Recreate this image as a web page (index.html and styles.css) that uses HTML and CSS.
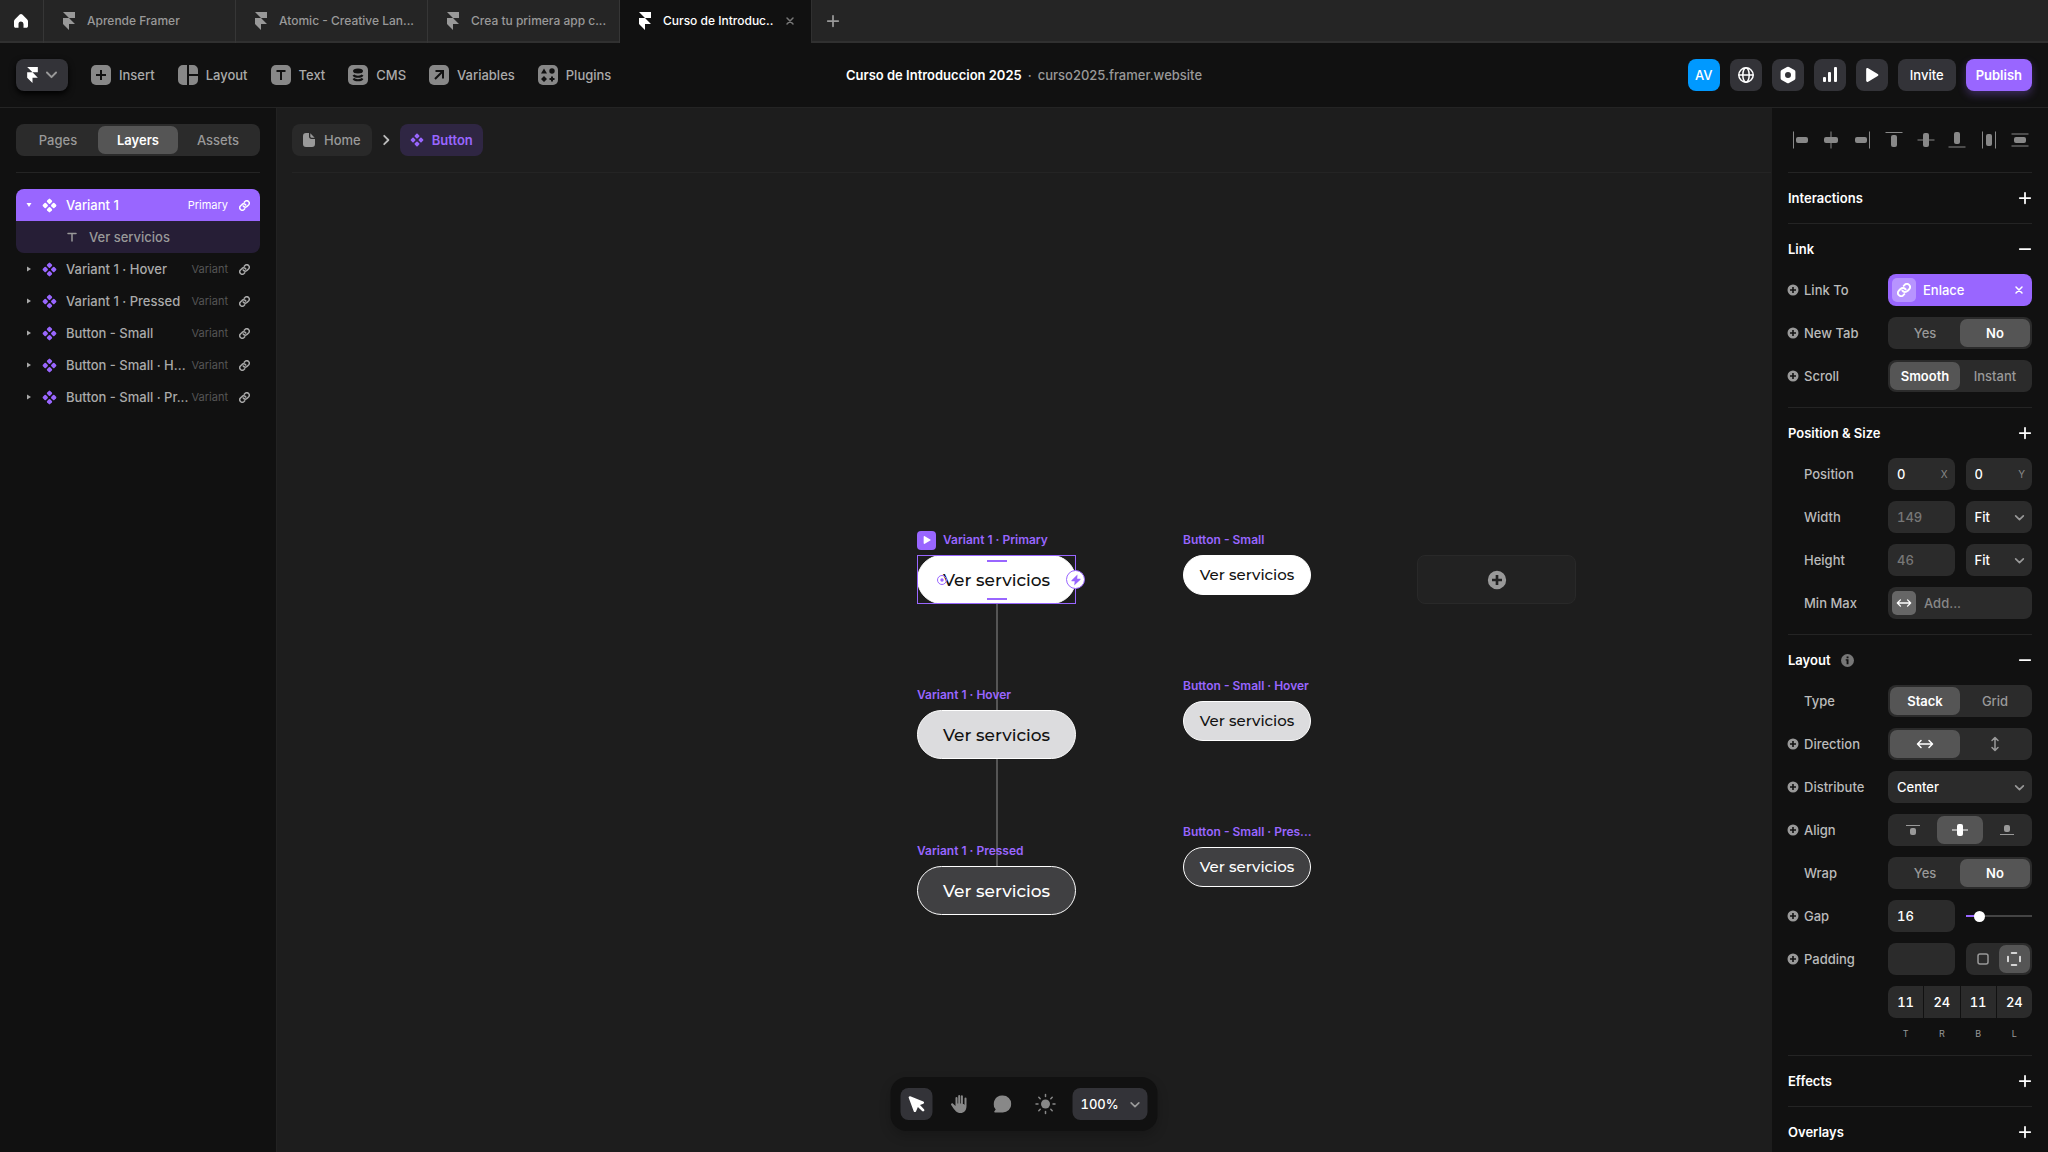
FILE: index.html
```html
<!DOCTYPE html>
<html lang="es">
<head>
    <meta charset="utf-8">
    <title>Curso de Introduccion 2025</title>
    <link rel="stylesheet" href="styles.css">
</head>
<body>
    <svg class="sprite" aria-hidden="true">
        <symbol id="logo" viewBox="0 0 16 24"><path d="M0 0h16v8H8zM0 8h8l8 8H0zM0 16h8v8z"/></symbol>
        <symbol id="home" viewBox="0 0 14 14"><path d="M7 0c.5 0 .9.3 1.300.6L13 5.200c.6.600 1 1.300 1 2.100V12c0 1-.7 1.800-1.700 1.800H9.500V10a2.500 2.500 0 0 0-5 0v3.800H1.700C.7 13.800 0 13 0 12V7.300c0-.8.4-1.500 1-2.100L5.700.6C6.100.3 6.500 0 7 0z"/></symbol>
        <symbol id="chevron" viewBox="0 0 10 10"><path class="line" d="M1.500 3.500L5 7l3.500-3.500"/></symbol>
        <symbol id="plus" viewBox="0 0 12 12"><path class="line" d="M6 1.500v9M1.500 6h9"/></symbol>
        <symbol id="minus" viewBox="0 0 12 12"><path class="line" d="M1.500 6h9"/></symbol>
        <symbol id="close" viewBox="0 0 10 10"><path class="line" d="M2 2l6 6M8 2l-6 6"/></symbol>
        <symbol id="component" viewBox="0 0 16 16"><rect x="5.700" y="1.200" width="4.600" height="4.600" rx="1" transform="rotate(45 8 3.500)"/><rect x="5.700" y="10.200" width="4.600" height="4.600" rx="1" transform="rotate(45 8 12.500)"/><rect x="1.200" y="5.700" width="4.600" height="4.600" rx="1" transform="rotate(45 3.500 8)"/><rect x="10.200" y="5.700" width="4.600" height="4.600" rx="1" transform="rotate(45 12.500 8)"/></symbol>
        <symbol id="link" viewBox="1 1 22 22"><path class="line chain" d="M9.500 13a5 5 0 0 0 8 .5l3-3a5 5 0 0 0-7-7L11.500 5.500M14.500 11a5 5 0 0 0-8-.5l-3 3a5 5 0 0 0 7 7L12.500 18.500"/></symbol>
        <symbol id="add" viewBox="0 0 12 12"><path fill-rule="evenodd" d="M6 .5a5.500 5.500 0 1 0 0 11 5.500 5.500 0 0 0 0-11zM5.200 3h1.600v2.200H9v1.600H6.800V9H5.200V6.800H3V5.200h2.200z"/></symbol>
        <symbol id="arrows" viewBox="0 0 18 12"><path class="line" d="M2 6h14M5 2.500L1.500 6 5 9.500M13 2.500L16.500 6 13 9.500"/></symbol>
        <symbol id="arrows-v" viewBox="0 0 12 16"><path class="line" d="M6 2v12M3 4.500L6 1.500l3 3M3 11.500l3 3 3-3"/></symbol>
        <symbol id="play" viewBox="0 0 12 12"><path d="M1 1.200C1 .3 1.900-.2 2.700.3l8.200 4.800c.8.400.8 1.400 0 1.800l-8.200 4.800c-.8.500-1.700 0-1.700-.9z"/></symbol>
        <symbol id="caret" viewBox="0 0 6 6"><path d="M1 .5v5L5 3z"/></symbol>
        <symbol id="align-left" viewBox="0 0 18 18"><path d="M2 .5h1v17H2z"/><rect x="5" y="6" width="12" height="6" rx="2"/></symbol>
        <symbol id="align-center" viewBox="0 0 18 18"><path d="M8.500.5h1v17h-1z"/><rect x="2" y="6" width="14" height="6" rx="2"/></symbol>
        <symbol id="align-right" viewBox="0 0 18 18"><path d="M15 .5h1v17h-1z"/><rect x="1" y="6" width="12" height="6" rx="2"/></symbol>
        <symbol id="align-top" viewBox="0 0 18 18"><path d="M.5 1h17v1H.5z"/><rect x="6" y="4" width="6" height="12" rx="2"/></symbol>
        <symbol id="align-middle" viewBox="0 0 18 18"><path d="M.5 8.500h17v1H.5z"/><rect x="6" y="2" width="6" height="14" rx="2"/></symbol>
        <symbol id="align-bottom" viewBox="0 0 18 18"><path d="M.5 15.500h17v1H.5z"/><rect x="6" y="1" width="6" height="12" rx="2"/></symbol>
        <symbol id="spread-h" viewBox="0 0 18 18"><path d="M2 .5h1v17H2zM15 .5h1v17h-1z"/><rect x="6" y="3" width="6" height="12" rx="2"/></symbol>
        <symbol id="spread-v" viewBox="0 0 18 18"><path d="M.5 2.500h17v1H.5zM.5 14.500h17v1H.5z"/><rect x="3" y="6" width="12" height="6" rx="2"/></symbol>
    </svg>

    <nav class="tabs">
        <a class="tab tab-home" href="#" aria-label="Home"><svg width="14" height="14"><use href="#home"/></svg></a>
        <a class="tab" href="#"><svg width="12" height="18"><use href="#logo"/></svg><span>Aprende Framer</span></a>
        <a class="tab" href="#"><svg width="12" height="18"><use href="#logo"/></svg><span>Atomic - Creative Lan...</span></a>
        <a class="tab" href="#"><svg width="12" height="18"><use href="#logo"/></svg><span>Crea tu primera app c...</span></a>
        <a class="tab active" href="#"><svg width="12" height="18"><use href="#logo"/></svg><span>Curso de Introduc..</span><svg class="tab-close" width="10" height="10"><use href="#close"/></svg></a>
        <button class="new-tab" aria-label="New tab"><svg width="14" height="14"><use href="#plus"/></svg></button>
    </nav>

    <header class="toolbar">
        <div class="tools">
            <button class="box menu" aria-label="Menu"><svg width="11" height="16"><use href="#logo"/></svg><svg width="13" height="13"><use href="#chevron"/></svg></button>
            <button class="tool"><svg width="20" height="20" viewBox="0 0 20 20"><rect width="20" height="20" rx="5"/><path class="cut" d="M10 5v10M5 10h10"/></svg>Insert</button>
            <button class="tool"><svg width="20" height="20" viewBox="0 0 20 20"><path d="M5 0h4v20H5a5 5 0 0 1-5-5V5a5 5 0 0 1 5-5zM11 0h4a5 5 0 0 1 5 5v4h-9zM11 11h9v4a5 5 0 0 1-5 5h-4z"/></svg>Layout</button>
            <button class="tool"><svg width="20" height="20" viewBox="0 0 20 20"><rect width="20" height="20" rx="5"/><path class="cut" d="M5.500 6h9M10 6v9"/></svg>Text</button>
            <button class="tool"><svg width="20" height="20" viewBox="0 0 20 20"><rect width="20" height="20" rx="5"/><ellipse class="hole" cx="10" cy="6" rx="5" ry="2.500"/><path class="cut" d="M5.500 10c1 2.300 8 2.300 9 0M5.500 13.500c1 2.300 8 2.300 9 0"/></svg>CMS</button>
            <button class="tool"><svg width="20" height="20" viewBox="0 0 20 20"><rect width="20" height="20" rx="5"/><path class="cut" d="M6 14l7.500-7.500M6.500 6H14v7.500"/></svg>Variables</button>
            <button class="tool"><svg width="20" height="20" viewBox="0 0 20 20"><rect width="20" height="20" rx="5"/><path class="hole" d="M6 3.500l3 5H3zM6 11l3 3-3 3-3-3z"/><circle class="hole" cx="14" cy="6" r="2.700"/><path class="cut" d="M14 11.500v5M11.500 14h5"/></svg>Plugins</button>
        </div>
        <div class="project"><b>Curso de Introduccion 2025</b><span>·</span><a href="#">curso2025.framer.website</a></div>
        <div class="actions">
            <button class="box avatar">AV</button>
            <button class="box" aria-label="Language"><svg width="18" height="18" viewBox="0 0 18 18"><g class="line"><circle cx="9" cy="9" r="7.200"/><ellipse cx="9" cy="9" rx="3.200" ry="7.200"/><path d="M2 9h14"/></g></svg></button>
            <button class="box" aria-label="Settings"><svg width="18" height="18" viewBox="0 0 18 18"><path fill-rule="evenodd" d="M8 1.100q1-.5 2 0l5.400 3q1 .6 1 1.700v6.400q0 1.100-1 1.700l-5.400 3q-1 .5-2 0l-5.400-3q-1-.6-1-1.700V5.800q0-1.100 1-1.700zM9 6a3 3 0 1 0 0 6 3 3 0 0 0 0-6z"/></svg></button>
            <button class="box" aria-label="Analytics"><svg width="18" height="18" viewBox="0 0 18 18"><rect x="2" y="11" width="3" height="5" rx="1"/><rect x="7" y="6" width="3" height="10" rx="1"/><rect x="13" y="1" width="3" height="15" rx="1"/></svg></button>
            <button class="box" aria-label="Preview"><svg width="14" height="14"><use href="#play"/></svg></button>
            <button class="box invite">Invite</button>
            <button class="box publish">Publish</button>
        </div>
    </header>

    <main class="editor">
        <aside class="sidebar">
            <div class="segmented side-tabs">
                <button>Pages</button>
                <button class="on">Layers</button>
                <button>Assets</button>
            </div>
            <ul class="layers">
                <li class="layer selected"><svg class="caret open" width="6" height="6"><use href="#caret"/></svg><svg width="15" height="15"><use href="#component"/></svg><span>Variant 1</span><small>Primary</small><svg class="thin" width="11" height="11"><use href="#link"/></svg></li>
                <li class="layer child"><svg width="10" height="10" viewBox="0 0 10 10"><path class="line" d="M1 1.500h8M5 1.500V9"/></svg><span>Ver servicios</span></li>
                <li class="layer"><svg class="caret" width="6" height="6"><use href="#caret"/></svg><svg width="15" height="15"><use href="#component"/></svg><span>Variant 1 · Hover</span><small>Variant</small><svg class="thin" width="11" height="11"><use href="#link"/></svg></li>
                <li class="layer"><svg class="caret" width="6" height="6"><use href="#caret"/></svg><svg width="15" height="15"><use href="#component"/></svg><span>Variant 1 · Pressed</span><small>Variant</small><svg class="thin" width="11" height="11"><use href="#link"/></svg></li>
                <li class="layer"><svg class="caret" width="6" height="6"><use href="#caret"/></svg><svg width="15" height="15"><use href="#component"/></svg><span>Button - Small</span><small>Variant</small><svg class="thin" width="11" height="11"><use href="#link"/></svg></li>
                <li class="layer"><svg class="caret" width="6" height="6"><use href="#caret"/></svg><svg width="15" height="15"><use href="#component"/></svg><span>Button - Small · H...</span><small>Variant</small><svg class="thin" width="11" height="11"><use href="#link"/></svg></li>
                <li class="layer"><svg class="caret" width="6" height="6"><use href="#caret"/></svg><svg width="15" height="15"><use href="#component"/></svg><span>Button - Small · Pr...</span><small>Variant</small><svg class="thin" width="11" height="11"><use href="#link"/></svg></li>
            </ul>
        </aside>

        <section class="canvas">
            <nav class="crumbs">
                <a class="crumb" href="#"><svg width="12" height="14" viewBox="0 0 12 14"><path d="M3 0h3v3.500C6 5 7 6 8.500 6H12v5a3 3 0 0 1-3 3H3a3 3 0 0 1-3-3V3a3 3 0 0 1 3-3zM7.300.3l4.400 4.400H8.500c-.8 0-1.200-.4-1.200-1.200z"/></svg>Home</a>
                <svg class="sep" width="12" height="12"><use href="#chevron"/></svg>
                <a class="crumb current" href="#"><svg width="14" height="14"><use href="#component"/></svg>Button</a>
            </nav>

            <div class="world">
                <div class="wire wire-1"></div>
                <div class="wire wire-2"></div>
                <div class="node large primary">
                    <div class="node-name"><i class="badge"><svg width="8" height="8"><use href="#play"/></svg></i>Variant 1 · Primary</div>
                    <button class="pill">Ver servicios</button>
                    <div class="selection">
                        <i class="grip top"></i>
                        <i class="grip bottom"></i>
                        <svg class="target" width="10" height="10" viewBox="0 0 10 10"><circle class="line" cx="5" cy="5" r="4.500"/><circle cx="5" cy="5" r="1.700"/></svg>
                        <i class="bolt"><svg width="10" height="12" viewBox="0 0 10 12"><path d="M6.500.5L.6 6.200c-.4.500-.1 1 .4 1h2.700L3.200 11.500l6.200-5.700c.4-.5.200-1-.4-1H6.200z"/></svg></i>
                    </div>
                </div>
                <div class="node large hover"><div class="node-name">Variant 1 · Hover</div><button class="pill">Ver servicios</button></div>
                <div class="node large pressed"><div class="node-name">Variant 1 · Pressed</div><button class="pill">Ver servicios</button></div>
                <div class="node small primary"><div class="node-name">Button - Small</div><button class="pill">Ver servicios</button></div>
                <div class="node small hover"><div class="node-name">Button - Small · Hover</div><button class="pill">Ver servicios</button></div>
                <div class="node small pressed"><div class="node-name">Button - Small · Pres...</div><button class="pill">Ver servicios</button></div>
                <button class="add-variant" aria-label="Add variant"><svg width="20" height="20"><use href="#add"/></svg></button>
            </div>

            <div class="dock">
                <button class="box" aria-label="Select"><svg width="18" height="18" viewBox="0 0 18 18"><path d="M1.200 2.800c-.3-1 .6-1.900 1.600-1.500l13 5.200c1 .4 1 1.800 0 2.200L12.500 10l4 4.200a1.300 1.300 0 0 1-1.900 1.900l-4.200-4-1.900 4.300c-.4 1-1.800.9-2.200 0z"/></svg></button>
                <button class="box plain" aria-label="Pan"><svg width="18" height="20" viewBox="0 0 18 20"><path d="M14 11V4.500a1 1 0 0 1 2 0V12c0 4.500-2.500 7-6 7-3.800 0-5.500-2.300-9.300-8-.7-1.200.8-2.300 1.900-1.300L5 12V4a1 1 0 0 1 2 0v5.500h.7V2a1 1 0 0 1 2 0v7.500h.7V2.300a1 1 0 0 1 2 0V10h.8z"/></svg></button>
                <button class="box plain" aria-label="Comment"><svg width="18" height="18" viewBox="0 0 18 18"><path d="M9.300.5a8.300 8.300 0 0 1 0 17H1.500c-.8 0-1-.7-.6-1.200l1.300-1.800A8.500 8.500 0 0 1 9.300.5z"/></svg></button>
                <button class="box plain" aria-label="Theme"><svg width="22" height="22" viewBox="0 0 22 22"><circle cx="11" cy="11" r="4.500"/><path class="line" d="M11 1.500v2M11 18.500v2M1.500 11h2M18.500 11h2M4.300 4.300l1.400 1.400M16.300 16.300l1.400 1.400M4.300 17.700l1.400-1.400M16.300 5.700l1.400-1.400"/></svg></button>
                <div class="select zoom"><select aria-label="Zoom"><option>100%</option></select><svg width="11" height="11"><use href="#chevron"/></svg></div>
            </div>
        </section>

        <aside class="inspector">
            <div class="align-bar">
                <button aria-label="Align left"><svg width="18" height="18"><use href="#align-left"/></svg></button>
                <button aria-label="Align center"><svg width="18" height="18"><use href="#align-center"/></svg></button>
                <button aria-label="Align right"><svg width="18" height="18"><use href="#align-right"/></svg></button>
                <button aria-label="Align top"><svg width="18" height="18"><use href="#align-top"/></svg></button>
                <button aria-label="Align middle"><svg width="18" height="18"><use href="#align-middle"/></svg></button>
                <button aria-label="Align bottom"><svg width="18" height="18"><use href="#align-bottom"/></svg></button>
                <button aria-label="Distribute horizontally"><svg width="18" height="18"><use href="#spread-h"/></svg></button>
                <button aria-label="Distribute vertically"><svg width="18" height="18"><use href="#spread-v"/></svg></button>
            </div>

            <section class="group">
                <h2>Interactions<button aria-label="Add interaction"><svg width="14" height="14"><use href="#plus"/></svg></button></h2>
            </section>

            <section class="group">
                <h2>Link<button aria-label="Remove link"><svg width="14" height="14"><use href="#minus"/></svg></button></h2>
                <div class="rows">
                    <div class="row">
                        <span class="name"><svg width="12" height="12"><use href="#add"/></svg>Link To</span>
                        <button class="field link-value"><i class="chip"><svg width="14" height="14"><use href="#link"/></svg></i>Enlace<svg class="clear" width="10" height="10"><use href="#close"/></svg></button>
                    </div>
                    <div class="row">
                        <span class="name"><svg width="12" height="12"><use href="#add"/></svg>New Tab</span>
                        <div class="segmented"><button>Yes</button><button class="on">No</button></div>
                    </div>
                    <div class="row">
                        <span class="name"><svg width="12" height="12"><use href="#add"/></svg>Scroll</span>
                        <div class="segmented"><button class="on">Smooth</button><button>Instant</button></div>
                    </div>
                </div>
            </section>

            <section class="group">
                <h2>Position &amp; Size<button aria-label="Add position"><svg width="14" height="14"><use href="#plus"/></svg></button></h2>
                <div class="rows">
                    <div class="row">
                        <label class="name" for="pos-x">Position</label>
                        <div class="pair">
                            <div class="field"><input id="pos-x" value="0"><small>X</small></div>
                            <div class="field"><input aria-label="Y" value="0"><small>Y</small></div>
                        </div>
                    </div>
                    <div class="row">
                        <label class="name" for="width">Width</label>
                        <div class="pair">
                            <div class="field dim"><input id="width" value="149"></div>
                            <div class="select"><select aria-label="Width mode"><option>Fit</option></select><svg width="11" height="11"><use href="#chevron"/></svg></div>
                        </div>
                    </div>
                    <div class="row">
                        <label class="name" for="height">Height</label>
                        <div class="pair">
                            <div class="field dim"><input id="height" value="46"></div>
                            <div class="select"><select aria-label="Height mode"><option>Fit</option></select><svg width="11" height="11"><use href="#chevron"/></svg></div>
                        </div>
                    </div>
                    <div class="row">
                        <span class="name">Min Max</span>
                        <button class="field min-max"><i class="chip"><svg width="16" height="12"><use href="#arrows"/></svg></i>Add...</button>
                    </div>
                </div>
            </section>

            <section class="group">
                <h2>Layout<svg class="info" width="13" height="13" viewBox="0 0 13 13"><circle cx="6.500" cy="6.500" r="6.500"/><path class="hole" d="M5.600 2.500h1.900v1.800H5.600zM4.700 5.300h2.800v5H5.600V6.600h-.9z"/></svg><button aria-label="Remove layout"><svg width="14" height="14"><use href="#minus"/></svg></button></h2>
                <div class="rows">
                    <div class="row">
                        <span class="name">Type</span>
                        <div class="segmented"><button class="on">Stack</button><button>Grid</button></div>
                    </div>
                    <div class="row">
                        <span class="name"><svg width="12" height="12"><use href="#add"/></svg>Direction</span>
                        <div class="segmented"><button class="on" aria-label="Horizontal"><svg width="18" height="12"><use href="#arrows"/></svg></button><button aria-label="Vertical"><svg width="12" height="16"><use href="#arrows-v"/></svg></button></div>
                    </div>
                    <div class="row">
                        <label class="name" for="distribute"><svg width="12" height="12"><use href="#add"/></svg>Distribute</label>
                        <div class="select"><select id="distribute"><option>Center</option></select><svg width="11" height="11"><use href="#chevron"/></svg></div>
                    </div>
                    <div class="row">
                        <span class="name"><svg width="12" height="12"><use href="#add"/></svg>Align</span>
                        <div class="segmented">
                            <button aria-label="Start"><svg width="16" height="16" viewBox="0 0 16 16"><path d="M1 3h14v1H1z"/><rect x="5" y="6" width="6" height="7" rx="2"/></svg></button>
                            <button class="on" aria-label="Center"><svg width="18" height="16" viewBox="0 0 18 16"><path d="M1 7.500h16v1H1z"/><rect x="6" y="2" width="6" height="12" rx="2"/></svg></button>
                            <button aria-label="End"><svg width="16" height="16" viewBox="0 0 16 16"><path d="M1 12h14v1H1z"/><rect x="5" y="3" width="6" height="7" rx="2"/></svg></button>
                        </div>
                    </div>
                    <div class="row">
                        <span class="name">Wrap</span>
                        <div class="segmented"><button>Yes</button><button class="on">No</button></div>
                    </div>
                    <div class="row">
                        <label class="name" for="gap"><svg width="12" height="12"><use href="#add"/></svg>Gap</label>
                        <div class="pair">
                            <div class="field"><input id="gap" value="16"></div>
                            <input class="slider" type="range" min="0" max="100" value="16" aria-label="Gap slider">
                        </div>
                    </div>
                    <div class="row">
                        <label class="name" for="padding"><svg width="12" height="12"><use href="#add"/></svg>Padding</label>
                        <div class="pair">
                            <div class="field"><input id="padding" value=""></div>
                            <div class="segmented"><button aria-label="All sides"><svg width="12" height="12" viewBox="0 0 12 12"><rect class="line" x="1" y="1" width="10" height="10" rx="2"/></svg></button><button class="on" aria-label="Each side"><svg width="14" height="14" viewBox="0 0 14 14"><path class="line" d="M4.500 1h5M4.500 13h5M1 4.500v5M13 4.500v5"/></svg></button></div>
                        </div>
                    </div>
                    <div class="row">
                        <div class="sides">
                            <label><input value="11">T</label>
                            <label><input value="24">R</label>
                            <label><input value="11">B</label>
                            <label><input value="24">L</label>
                        </div>
                    </div>
                </div>
            </section>

            <section class="group">
                <h2>Effects<button aria-label="Add effect"><svg width="14" height="14"><use href="#plus"/></svg></button></h2>
            </section>
            <section class="group">
                <h2>Overlays<button aria-label="Add overlay"><svg width="14" height="14"><use href="#plus"/></svg></button></h2>
            </section>
        </aside>
    </main>
</body>
</html>
```

FILE: styles.css
```css
* {
    box-sizing: border-box;
}
body {
    margin: 0;
    height: 100vh;
    display: flex;
    flex-direction: column;
    overflow: hidden;
    background: #111;
    color: #fff;
    font-family: Inter, "Liberation Sans", sans-serif;
    font-size: 13px;
    font-weight: 500;
    line-height: 16px;
}
button, input, select {
    font: inherit;
    color: inherit;
    background: none;
    border: 0;
    padding: 0;
    margin: 0;
    min-width: 0;
}
input, select {
    font-variant-numeric: tabular-nums;
}
a {
    color: inherit;
    text-decoration: none;
}
svg {
    fill: currentColor;
    flex: none;
    display: block;
}
.sprite {
    position: absolute;
    width: 0;
    height: 0;
}
.line {
    fill: none;
    stroke: currentColor;
    stroke-width: 1.5;
    stroke-linecap: round;
    stroke-linejoin: round;
}
.chain {
    stroke-width: 3;
}
.cut {
    fill: none;
    stroke: #111;
    stroke-width: 2;
}
.hole {
    fill: #111;
}

/* browser tabs */
.tabs {
    display: flex;
    height: 43px;
    flex: none;
    background: #252525;
    box-shadow: inset 0 -2px #303030;
}
.tab {
    display: flex;
    align-items: center;
    width: 192px;
    padding: 0 20px 2px 19px;
    gap: 12px;
    border-right: 1px solid #363636;
    color: #999;
    font-size: 12px;
    white-space: nowrap;
}
.tab-home {
    width: 44px;
    padding: 0 14px 2px;
    color: #fff;
}
.tab.active {
    background: #111;
    color: #fff;
    border-right-color: #303030;
}
.tab-close {
    margin-left: auto;
    margin-right: -4px;
    color: #777;
}
.new-tab {
    width: 44px;
    padding: 0 14px 2px;
    color: #999;
}

/* toolbar */
.toolbar {
    display: grid;
    grid-template-columns: 1fr auto 1fr;
    align-items: center;
    height: 65px;
    flex: none;
    padding: 0 16px 1px;
    border-bottom: 1px solid #242424;
}
.tools, .actions {
    display: flex;
    align-items: center;
}
.tools {
    gap: 23px;
}
.actions {
    justify-content: flex-end;
    gap: 10px;
}
.box {
    display: flex;
    align-items: center;
    justify-content: center;
    width: 32px;
    height: 32px;
    border-radius: 8px;
    background: #333338;
}
.menu {
    width: 52px;
    gap: 7px;
    box-shadow: 0 3px 6px #000;
}
.menu svg:last-child {
    color: #999;
}
.tool {
    display: flex;
    align-items: center;
    gap: 8px;
    color: #aaa;
}
.tool svg {
    color: #888;
}
.project {
    display: flex;
    gap: 6px;
    color: #999;
}
.project b {
    font-weight: 600;
    color: #fff;
}
.avatar {
    background: #09f;
}
.invite, .publish {
    width: auto;
    padding: 0 12px;
}
.publish {
    background: #96f;
    font-weight: 600;
    padding: 0 10px;
    box-shadow: 0 4px 8px rgba(153, 102, 255, 0.3);
}

.editor {
    flex: 1;
    min-height: 0;
    display: grid;
    grid-template-columns: 277px 1fr 277px;
}
.segmented {
    display: flex;
    flex: 1;
    height: 32px;
    padding: 2px;
    border-radius: 8px;
    background: #2b2b2b;
    color: #999;
}
.segmented button {
    flex: 1;
    display: flex;
    align-items: center;
    justify-content: center;
    border-radius: 7px;
}
.segmented .on {
    background: #555;
    color: #fff;
    font-weight: 600;
}

/* layers */
.sidebar {
    padding: 16px 16px 0;
    border-right: 1px solid #222;
}
.layers {
    list-style: none;
    margin: 16px 0 0;
    padding: 16px 0 0;
    border-top: 1px solid #242424;
}
.layer {
    display: flex;
    align-items: center;
    height: 32px;
    padding: 0 10px;
    color: #aaa;
}
.layer > svg:nth-child(2) {
    margin: 0 9px 0 10px;
    color: #96f;
}
.layer small {
    margin-left: auto;
    font-size: 11px;
    font-weight: 400;
    color: #555;
}
.layer .thin {
    margin-left: 11px;
}
.caret.open {
    transform: rotate(90deg);
}
.layer.selected, .layer.selected small, .layer.selected svg:nth-child(2) {
    color: #fff;
}
.layer.selected {
    background: #96f;
    border-radius: 8px 8px 0 0;
}
.layer.child {
    padding-left: 51px;
    gap: 12px;
    background: #261e36;
    border-radius: 0 0 8px 8px;
    color: #999;
}

/* canvas */
.canvas {
    position: relative;
    overflow: hidden;
    padding: 0 0 0 15px;
    background: #1d1d1d;
}
.crumbs {
    display: flex;
    align-items: center;
    height: 65px;
    border-bottom: 1px solid #242424;
}
.crumb {
    display: flex;
    align-items: center;
    gap: 9px;
    height: 32px;
    padding: 0 11px;
    border-radius: 8px;
    background: #292929;
    color: #999;
}
.crumb.current {
    gap: 8px;
    padding: 0 10px;
    background: #2f2643;
    color: #96f;
    font-weight: 600;
}
.sep {
    margin: 0 8px;
    color: #bbb;
    transform: rotate(-90deg);
}
.world {
    position: absolute;
    left: 50%;
    top: 0;
}
.node {
    position: absolute;
}
.node.large {
    left: -107px;
    width: 159px;
}
.node.small {
    left: 159px;
    width: 128px;
}
.large.primary { top: 422px; }
.large.hover { top: 577px; }
.large.pressed { top: 733px; }
.small.primary { top: 422px; }
.small.hover { top: 568px; }
.small.pressed { top: 714px; }
.node-name {
    display: flex;
    align-items: center;
    gap: 7px;
    height: 20px;
    margin-bottom: 5px;
    color: #96f;
    font-size: 12px;
    font-weight: 600;
    white-space: nowrap;
}
.badge {
    display: grid;
    place-items: center;
    width: 19px;
    height: 19px;
    border-radius: 4px;
    background: #96f;
    color: #fff;
}
.pill {
    display: block;
    width: 100%;
    height: 49px;
    border: 1px solid #fff;
    border-radius: 25px;
    background: #fff;
    color: #111;
    font-family: Montserrat, Inter, sans-serif;
    font-size: 17px;
}
.small .pill {
    height: 40px;
    font-size: 15px;
}
.hover .pill {
    background: #dcdcde;
}
.pressed .pill {
    background: #404042;
    color: #fff;
}
.selection {
    position: absolute;
    left: 0;
    right: 0;
    bottom: 0;
    height: 49px;
    border: 1px solid #96f;
    color: #96f;
}
.grip {
    position: absolute;
    left: 69px;
    width: 20px;
    height: 2px;
    background: #96f;
}
.grip.top { top: 4px; }
.grip.bottom { bottom: 3px; }
.target {
    position: absolute;
    left: 19px;
    top: 19px;
}
.target .line {
    stroke-width: 1;
}
.bolt {
    position: absolute;
    right: -10px;
    top: 14px;
    display: grid;
    place-items: center;
    width: 19px;
    height: 19px;
    border: 1px solid #96f;
    border-radius: 50%;
    background: #fff;
}
.wire {
    position: absolute;
    left: -28px;
    width: 2px;
    height: 108px;
    background: #555;
}
.wire-1 { top: 495px; }
.wire-2 { top: 651px; }
.add-variant {
    position: absolute;
    left: 393px;
    top: 447px;
    display: grid;
    place-items: center;
    width: 159px;
    height: 49px;
    border: 1px solid #292929;
    border-radius: 8px;
    background: #222;
    color: #999;
}
.dock {
    position: absolute;
    left: 50%;
    bottom: 21px;
    transform: translateX(-50%);
    display: flex;
    gap: 11px;
    padding: 11px 10px;
    border-radius: 16px;
    background: #111;
    box-shadow: 0 5px 12px rgba(0, 0, 0, 0.2);
}
.box.plain {
    background: none;
    color: #888;
}

/* inspector */
.inspector {
    padding: 0 16px;
    border-left: 1px solid #1d1d1d;
    overflow: hidden;
}
.align-bar {
    display: flex;
    justify-content: space-between;
    align-items: center;
    height: 64px;
    padding: 0 3px;
    color: #888;
}
.group {
    border-top: 1px solid #242424;
}
h2 {
    display: flex;
    align-items: center;
    height: 50px;
    margin: 0;
    font-size: 13px;
    font-weight: 600;
}
h2 button {
    margin-left: auto;
}
.info {
    margin-left: 11px;
    color: #777;
}
.rows {
    display: flex;
    flex-direction: column;
    gap: 11px;
    padding-bottom: 15px;
}
.row {
    display: flex;
}
.name {
    display: flex;
    align-items: center;
    width: 100px;
    padding-left: 16px;
    color: #bbb;
}
.name svg {
    margin-left: -17px;
    margin-right: 5px;
    color: #999;
}
.pair {
    flex: 1;
    display: grid;
    grid-template-columns: 1fr 1fr;
    gap: 11px;
}
.field, .select {
    position: relative;
    display: flex;
    align-items: center;
    flex: 1;
    min-width: 0;
    height: 32px;
    border-radius: 8px;
    background: #2b2b2b;
}
.field input {
    width: 100%;
    padding: 0 0 0 9px;
}
.field small {
    margin-right: 7px;
    font-size: 10px;
    font-weight: 400;
    color: #888;
}
.dim {
    color: #777;
}
.select select {
    appearance: none;
    width: 100%;
    height: 32px;
    padding: 0 24px 0 9px;
}
.select svg {
    position: absolute;
    right: 7px;
    color: #999;
    pointer-events: none;
}
.select.zoom {
    width: 75px;
    flex: none;
    background: #333338;
}
.zoom select {
    padding: 0 20px 0 8px;
}
.link-value {
    background: #96f;
}
.chip {
    display: grid;
    place-items: center;
    width: 24px;
    height: 24px;
    margin: 0 7px 0 4px;
    border-radius: 5px;
    background: rgba(255, 255, 255, 0.3);
    color: #fff;
}
.clear {
    margin-left: auto;
    margin-right: 8px;
}
.min-max {
    color: #888;
}
.min-max .chip {
    margin-right: 8px;
    background: #666;
}
.slider {
    appearance: none;
    align-self: center;
    width: 66px;
    height: 11px;
    background: linear-gradient(to right, #96f 20%, #444 20%) center / 100% 2px no-repeat;
}
.slider::-webkit-slider-thumb {
    appearance: none;
    width: 11px;
    height: 11px;
    border-radius: 50%;
    background: #fff;
}
.sides {
    display: grid;
    grid-template-columns: repeat(4, 1fr);
    gap: 1px;
    flex: 1;
    margin-left: 100px;
}
.sides label {
    font-size: 9px;
    font-weight: 400;
    text-align: center;
    color: #999;
    line-height: 12px;
}
.sides input {
    display: block;
    width: 100%;
    height: 32px;
    margin-bottom: 10px;
    background: #2b2b2b;
    color: #fff;
    font-size: 13px;
    font-weight: 500;
    text-align: center;
}
.sides label:first-child input {
    border-radius: 8px 0 0 8px;
}
.sides label:last-child input {
    border-radius: 0 8px 8px 0;
}
```
